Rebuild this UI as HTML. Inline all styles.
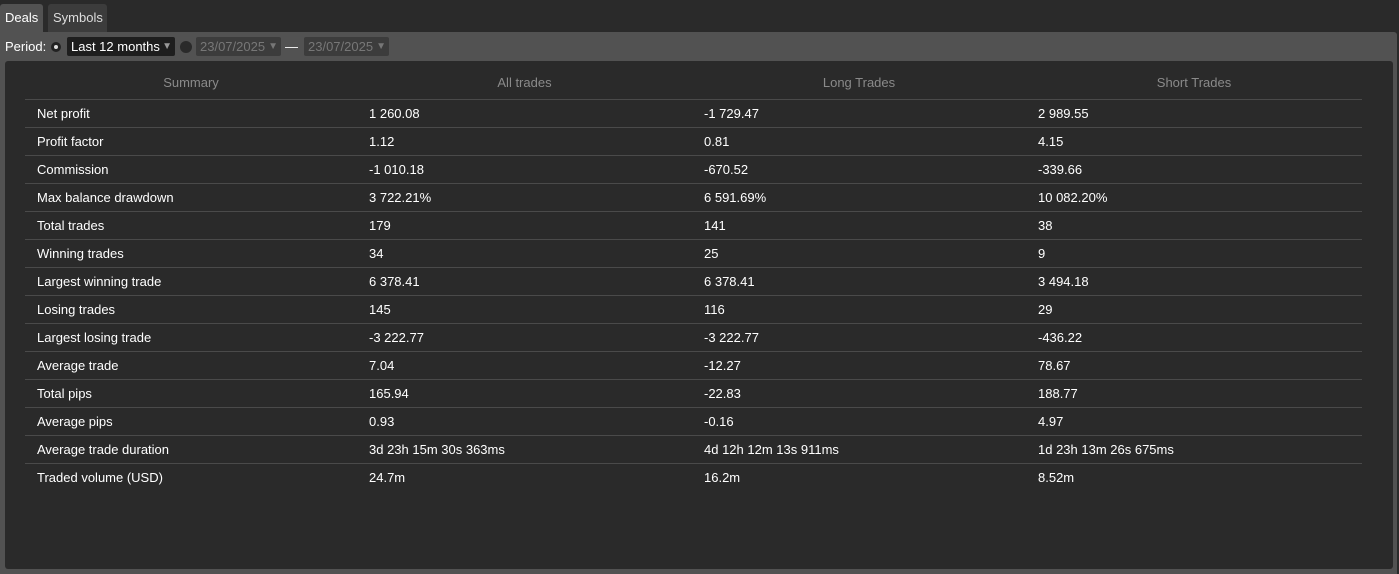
<!DOCTYPE html>
<html><head><style>
*{margin:0;padding:0;box-sizing:border-box}
body{width:1399px;height:574px;background:#2a2a2a;font-family:"Liberation Sans",sans-serif;font-size:13px;color:#fff;position:relative;overflow:hidden}
.tab{position:absolute;top:4px;height:28px;line-height:28px;padding:0 5px;border-radius:3px 3px 0 0}
#panel{position:absolute;left:0;top:32px;width:1397px;height:542px;background:#525252;border-radius:0 3px 0 0}
.per{position:absolute;top:5px;height:19px;line-height:19px}
.sel{position:absolute;top:5px;height:19px;line-height:19px;padding-left:4px;border-radius:2px}
.sel i{font-style:normal;font-size:10px;position:absolute;right:3px;top:0}
#box{position:absolute;left:5px;top:29px;width:1388px;height:508px;background:#2a2a2a;border-radius:3px}
table{position:absolute;left:20px;top:0;border-collapse:collapse;width:1337px;table-layout:fixed}
td,th{text-align:left;padding-left:12px;height:28px;border-bottom:1px solid #4a4a4a}
th{font-weight:normal;color:#8a8a8a;text-align:center;padding:0;height:38px;padding-top:5px}
tr:last-child td{border-bottom:none}
</style></head><body>
<div class="tab" style="left:0;width:43px;background:#525252">Deals</div>
<div class="tab" style="left:48px;width:59px;background:#3c3c3c;color:#ddd">Symbols</div>
<div id="panel">
<div class="per" style="left:5px">Period:</div>
<div style="position:absolute;left:51px;top:10px;width:10px;height:10px;border-radius:50%;background:#ddd;border:3px solid #222"></div>
<div class="sel" style="left:67px;width:108px;background:#1e1e1e">Last 12 months<i style="color:#999">▼</i></div>
<div style="position:absolute;left:180px;top:9px;width:12px;height:12px;border-radius:50%;background:#2a2a2a"></div>
<div class="sel" style="left:196px;width:85px;background:#3c3c3c;color:#777">23/07/2025<i>▼</i></div>
<div class="per" style="left:285px">—</div>
<div class="sel" style="left:304px;width:85px;background:#3c3c3c;color:#777">23/07/2025<i>▼</i></div>
<div id="box">
<table>
<colgroup><col style="width:332px"><col style="width:335px"><col style="width:334px"><col style="width:336px"></colgroup>
<tr><th>Summary</th><th>All trades</th><th>Long Trades</th><th>Short Trades</th></tr>
<tr><td>Net profit</td><td>1 260.08</td><td>-1 729.47</td><td>2 989.55</td></tr>
<tr><td>Profit factor</td><td>1.12</td><td>0.81</td><td>4.15</td></tr>
<tr><td>Commission</td><td>-1 010.18</td><td>-670.52</td><td>-339.66</td></tr>
<tr><td>Max balance drawdown</td><td>3 722.21%</td><td>6 591.69%</td><td>10 082.20%</td></tr>
<tr><td>Total trades</td><td>179</td><td>141</td><td>38</td></tr>
<tr><td>Winning trades</td><td>34</td><td>25</td><td>9</td></tr>
<tr><td>Largest winning trade</td><td>6 378.41</td><td>6 378.41</td><td>3 494.18</td></tr>
<tr><td>Losing trades</td><td>145</td><td>116</td><td>29</td></tr>
<tr><td>Largest losing trade</td><td>-3 222.77</td><td>-3 222.77</td><td>-436.22</td></tr>
<tr><td>Average trade</td><td>7.04</td><td>-12.27</td><td>78.67</td></tr>
<tr><td>Total pips</td><td>165.94</td><td>-22.83</td><td>188.77</td></tr>
<tr><td>Average pips</td><td>0.93</td><td>-0.16</td><td>4.97</td></tr>
<tr><td>Average trade duration</td><td>3d 23h 15m 30s 363ms</td><td>4d 12h 12m 13s 911ms</td><td>1d 23h 13m 26s 675ms</td></tr>
<tr><td>Traded volume (USD)</td><td>24.7m</td><td>16.2m</td><td>8.52m</td></tr>
</table>
</div>
</div>
</body></html>
